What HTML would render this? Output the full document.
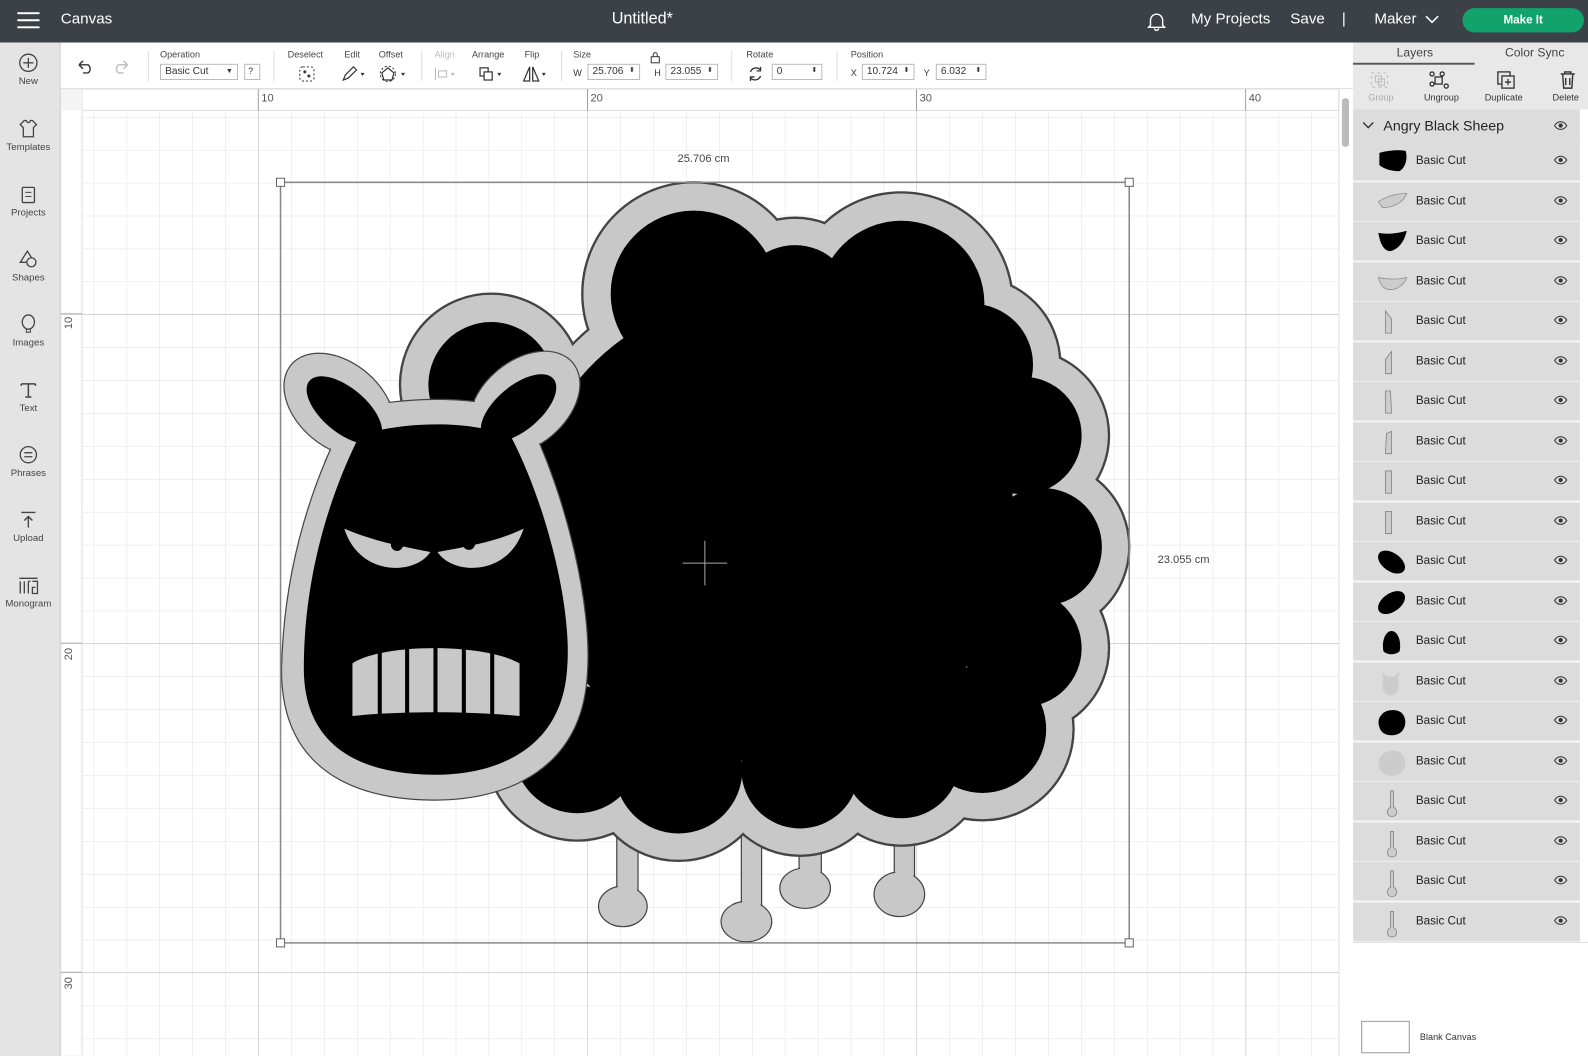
<!DOCTYPE html>
<html><head><meta charset="utf-8"><style>
*{box-sizing:border-box;margin:0;padding:0}
html,body{width:1588px;height:1056px;overflow:hidden;background:#fff}
body{font-family:"Liberation Sans",sans-serif;color:#333}
#w{position:absolute;left:0;top:0;width:1568px;height:1043px;transform:scale(1.01276);transform-origin:0 0;overflow:hidden}
.top{position:absolute;left:0;top:0;width:1568px;height:42px;background:#3c4148;color:#fff}
.top span{position:absolute;top:10px;font-size:16px}
.left{position:absolute;left:0;top:42px;width:60px;height:1014px;background:#e4e4e4;border-right:1px solid #ccc}
.nav{position:absolute;left:0;width:56px;text-align:center;font-size:9.5px;color:#444}
.nav svg{display:block;margin:0 auto 3px}
.tb{position:absolute;left:60px;top:42px;width:1276px;height:46px;background:#fff;border-bottom:1px solid #ddd}
.lb{position:absolute;top:7px;font-size:9px;color:#444}
.inp{position:absolute;top:21px;height:16px;border:1px solid #bbb;font-size:10px;padding:1px 4px;color:#333;background:#fff}
.sep{position:absolute;top:8px;width:1px;height:30px;background:#ddd}
.rp{position:absolute;left:1336px;top:42px;width:232px;height:1014px;background:#fff}
.row{position:absolute;left:0;width:224px;height:39px;background:#dcdcdc;border-bottom:1px solid #f0f0f0}
.row .t{position:absolute;left:62px;top:13px;font-size:11.5px;color:#222}
.eye{position:absolute;left:198px;top:13px}
.thumb{position:absolute;left:24px;top:7px}
</style></head><body><div id="w">
<div class="top">
<svg style="position:absolute;left:17px;top:12px" width="22" height="16"><rect y="0" width="22" height="2" fill="#fff"/><rect y="7" width="22" height="2" fill="#fff"/><rect y="14" width="22" height="2" fill="#fff"/></svg>
<span style="left:60px;font-size:15px">Canvas</span>
<span style="left:604px">Untitled*</span>
<svg style="position:absolute;left:1133px;top:11px" width="18" height="20" viewBox="0 0 18 20"><path d="M3 14V9a6 6 0 0 1 12 0v5l2 2H1z M7 17a2 2 0 0 0 4 0" fill="none" stroke="#fff" stroke-width="1.4"/></svg>
<span style="left:1176px;font-size:15px">My Projects</span>
<span style="left:1274px;font-size:15px">Save</span>
<span style="left:1325px;font-size:15px">|</span>
<span style="left:1357px;font-size:15px">Maker</span>
<svg style="position:absolute;left:1407px;top:15px" width="14" height="9"><path d="M1 1l6 6 6-6" fill="none" stroke="#fff" stroke-width="1.5"/></svg>
<div style="position:absolute;left:1444px;top:8px;width:120px;height:24px;border-radius:12px;background:#12a36c;color:#fff;font-size:11.5px;font-weight:bold;text-align:center;line-height:24px">Make It</div>
</div>

<div class="left">
<div class="nav" style="top:10px"><svg width="20" height="20"><circle cx="10" cy="10" r="8.5" fill="none" stroke="#444" stroke-width="1.3"/><path d="M10 5v10M5 10h10" stroke="#444" stroke-width="1.3"/></svg>New</div>
<div class="nav" style="top:75px"><svg width="20" height="20"><path d="M6 2l-4 4 3 3v9h10V9l3-3-4-4h-2a2 2 0 0 1-4 0z" fill="none" stroke="#444" stroke-width="1.3"/></svg>Templates</div>
<div class="nav" style="top:140px"><svg width="20" height="20"><rect x="4" y="3" width="12" height="15" rx="1" fill="none" stroke="#444" stroke-width="1.3"/><path d="M7 8h6M7 12h6" stroke="#444"/></svg>Projects</div>
<div class="nav" style="top:204px"><svg width="20" height="20"><path d="M9 2l-7 11h14z" fill="none" stroke="#444" stroke-width="1.3"/><circle cx="13" cy="13" r="4.5" fill="#e4e4e4" stroke="#444" stroke-width="1.3"/></svg>Shapes</div>
<div class="nav" style="top:268px"><svg width="20" height="20"><ellipse cx="10" cy="8" rx="6" ry="7" fill="none" stroke="#444" stroke-width="1.3"/><path d="M8 15h4v3H8z" fill="none" stroke="#444"/></svg>Images</div>
<div class="nav" style="top:333px"><svg width="20" height="20"><path d="M3 4h14M10 4v13M7 17h6M3 4v2M17 4v2" stroke="#444" stroke-width="1.5" fill="none"/></svg>Text</div>
<div class="nav" style="top:397px"><svg width="20" height="20"><circle cx="10" cy="10" r="8" fill="none" stroke="#444" stroke-width="1.3"/><path d="M6 8h8M6 12h8" stroke="#444" stroke-width="1.3"/></svg>Phrases</div>
<div class="nav" style="top:461px"><svg width="20" height="20"><path d="M3 3h14M10 7v11M6 11l4-4 4 4" stroke="#444" stroke-width="1.4" fill="none"/></svg>Upload</div>
<div class="nav" style="top:526px"><svg width="22" height="20"><path d="M2 3h18M3 6v12M7 6v12M11 6v12M11 6l2 0M15 6h5v12h-5v-6h3" stroke="#444" stroke-width="1.3" fill="none"/></svg>Monogram</div>
</div>

<div class="tb">
<svg style="position:absolute;left:16px;top:17px" width="18" height="14"><path d="M2 5h9a5 5 0 0 1 0 8H6M2 5l4-4M2 5l4 4" fill="none" stroke="#333" stroke-width="1.4"/></svg>
<svg style="position:absolute;left:50px;top:17px" width="18" height="14"><path d="M16 5H7a5 5 0 0 0 0 8h5M16 5l-4-4M16 5l-4 4" fill="none" stroke="#bbb" stroke-width="1.4"/></svg>
<div class="sep" style="left:86px"></div>
<div class="lb" style="left:98px">Operation</div>
<div class="inp" style="left:98px;width:77px">Basic Cut <span style="float:right;font-size:7px;margin-top:2px">▼</span></div>
<div class="inp" style="left:181px;width:16px;padding:1px 3px;font-size:9px">?</div>
<div class="sep" style="left:210px"></div>
<div class="lb" style="left:224px">Deselect</div>
<div class="lb" style="left:280px">Edit</div>
<div class="lb" style="left:314px">Offset</div>
<svg style="position:absolute;left:234px;top:22px" width="18" height="18"><rect x="2" y="2" width="14" height="14" rx="3" fill="none" stroke="#333" stroke-dasharray="2 2"/><circle cx="7" cy="7" r="1.5" fill="#333"/><circle cx="11" cy="11" r="1.5" fill="#333"/></svg>
<svg style="position:absolute;left:276px;top:22px" width="26" height="18"><path d="M3 15l2-5 8-8 3 3-8 8z" fill="none" stroke="#333" stroke-width="1.2"/><path d="M20 8l2 3 2-3z" fill="#333"/></svg>
<svg style="position:absolute;left:314px;top:22px" width="28" height="18"><path d="M9 3l6 5-2 7H5L3 8z" fill="none" stroke="#333" stroke-width="1.2"/><circle cx="9" cy="9" r="7.5" fill="none" stroke="#333" stroke-dasharray="2 2"/><path d="M22 8l2 3 2-3z" fill="#333"/></svg>
<div class="sep" style="left:356px"></div>
<div class="lb" style="left:369px;color:#bbb">Align</div>
<div class="lb" style="left:406px">Arrange</div>
<div class="lb" style="left:458px">Flip</div>
<svg style="position:absolute;left:369px;top:24px" width="24" height="14"><path d="M1 1v12M4 4h8v6H4z" fill="none" stroke="#bbb"/><path d="M16 6l2 3 2-3z" fill="#bbb"/></svg>
<svg style="position:absolute;left:412px;top:22px" width="26" height="18"><rect x="2" y="3" width="8" height="8" fill="none" stroke="#333" stroke-width="1.2"/><rect x="6" y="7" width="8" height="8" fill="#fff" stroke="#333" stroke-width="1.2"/><path d="M19 8l2 3 2-3z" fill="#333"/></svg>
<svg style="position:absolute;left:455px;top:22px" width="26" height="18"><path d="M8 2L2 16h6zM11 2l6 14h-6z" fill="none" stroke="#333" stroke-width="1.2"/><path d="M20 8l2 3 2-3z" fill="#333"/></svg>
<div class="sep" style="left:494px"></div>
<div class="lb" style="left:506px">Size</div>
<div style="position:absolute;left:506px;top:25px;font-size:9px">W</div>
<div class="inp" style="left:520px;width:52px">25.706 <span style="float:right;font-size:7px">⬍</span></div>
<svg style="position:absolute;left:581px;top:9px" width="12" height="12"><rect x="2" y="5" width="8" height="6" fill="none" stroke="#333"/><path d="M4 5V3a2 2 0 0 1 4 0v2" fill="none" stroke="#333"/></svg>
<div style="position:absolute;left:586px;top:25px;font-size:9px">H</div>
<div class="inp" style="left:597px;width:52px">23.055 <span style="float:right;font-size:7px">⬍</span></div>
<div class="sep" style="left:662px"></div>
<div class="lb" style="left:677px">Rotate</div>
<svg style="position:absolute;left:677px;top:22px" width="18" height="18"><path d="M14 5a6 6 0 0 0-10 2M4 13a6 6 0 0 0 10-2M14 2v4h-4M4 16v-4h4" fill="none" stroke="#333" stroke-width="1.3"/></svg>
<div class="inp" style="left:702px;width:50px">0 <span style="float:right;font-size:7px">⬍</span></div>
<div class="sep" style="left:766px"></div>
<div class="lb" style="left:780px">Position</div>
<div style="position:absolute;left:780px;top:25px;font-size:9px">X</div>
<div class="inp" style="left:791px;width:52px">10.724 <span style="float:right;font-size:7px">⬍</span></div>
<div style="position:absolute;left:852px;top:25px;font-size:9px">Y</div>
<div class="inp" style="left:864px;width:50px">6.032 <span style="float:right;font-size:7px">⬍</span></div>
</div>

<svg style="position:absolute;left:60px;top:88px" width="1276" height="968" viewBox="60 88 1276 968">
<defs>
<pattern id="mn" x="60" y="18" width="32.5" height="32.5" patternUnits="userSpaceOnUse"><path d="M0 0V32.5M0 0H32.5" stroke="#e2e2e2" stroke-width="1" fill="none"/></pattern>
<pattern id="mj" x="255" y="310" width="325" height="325" patternUnits="userSpaceOnUse"><path d="M0 0V325M0 0H325" stroke="#bdbdbd" stroke-width="1" fill="none"/></pattern>
</defs>
<rect x="60" y="88" width="1276" height="968" fill="#fff"/>
<rect x="60" y="88" width="1262" height="955" fill="url(#mn)"/>
<rect x="60" y="88" width="1262" height="955" fill="url(#mj)"/>
<rect x="60" y="88" width="1262" height="21" fill="#fff" stroke="#ddd"/>
<rect x="60" y="88" width="21" height="955" fill="#fff" stroke="#ddd"/>
<rect x="60" y="88" width="21" height="21" fill="#f4f4f4"/>
<g stroke="#888" stroke-width="0.8">
<path d="M255 88v21M580 88v21M905 88v21M1230 88v21M60 310h21M60 635h21M60 960h21"/>
</g>
<g font-size="11" fill="#555" font-family="Liberation Sans"><text x="258" y="100">10</text><text x="583" y="100">20</text><text x="908" y="100">30</text><text x="1233" y="100">40</text>
<text transform="translate(71 325) rotate(-90)">10</text><text transform="translate(71 652) rotate(-90)">20</text><text transform="translate(71 977) rotate(-90)">30</text></g>
<rect x="1325" y="97" width="7" height="48" rx="3" fill="#bbb"/>
<line x1="1322" y1="88" x2="1322" y2="1043" stroke="#ddd"/>

<!-- legs -->
<g fill="#c8c8c8" stroke="#444" stroke-width="1.2">
<rect x="609" y="820" width="21" height="60"/><ellipse cx="615" cy="895" rx="24" ry="20"/>
<rect x="732" y="820" width="20" height="80"/><ellipse cx="737" cy="910" rx="25" ry="20"/>
<rect x="789" y="810" width="22" height="55"/><ellipse cx="795" cy="877" rx="25" ry="20"/>
<rect x="883" y="800" width="20" height="65"/><ellipse cx="888" cy="883" rx="25" ry="22"/>
</g>
<g fill="#c8c8c8" stroke="none"><rect x="610" y="815" width="19" height="70"/><rect x="733" y="815" width="18" height="90"/><rect x="790" y="805" width="20" height="65"/><rect x="884" y="795" width="18" height="75"/></g>
<!-- body -->
<g id="bg" fill="#c8c8c8" stroke="#444" stroke-width="2.4">
<circle cx="685" cy="290" r="110"/><circle cx="785" cy="300" r="85"/><circle cx="890" cy="300" r="110"/><circle cx="960" cy="360" r="87"/>
<circle cx="1010" cy="430" r="85"/><circle cx="1030" cy="540" r="85"/><circle cx="1010" cy="640" r="85"/><circle cx="970" cy="720" r="90"/>
<circle cx="890" cy="750" r="85"/><circle cx="790" cy="760" r="85"/><circle cx="670" cy="760" r="90"/><circle cx="570" cy="740" r="90"/>
<circle cx="485" cy="380" r="90"/><ellipse cx="760" cy="520" rx="270" ry="260"/>
</g>
<g fill="#c8c8c8">
<circle cx="685" cy="290" r="108.8"/><circle cx="785" cy="300" r="83.8"/><circle cx="890" cy="300" r="108.8"/><circle cx="960" cy="360" r="85.8"/>
<circle cx="1010" cy="430" r="83.8"/><circle cx="1030" cy="540" r="83.8"/><circle cx="1010" cy="640" r="83.8"/><circle cx="970" cy="720" r="88.8"/>
<circle cx="890" cy="750" r="83.8"/><circle cx="790" cy="760" r="83.8"/><circle cx="670" cy="760" r="88.8"/><circle cx="570" cy="740" r="88.8"/>
<circle cx="485" cy="380" r="88.8"/><ellipse cx="760" cy="520" rx="268.8" ry="258.8"/>
</g>
<g fill="#000">
<circle cx="685" cy="290" r="82"/><circle cx="785" cy="300" r="58"/><circle cx="890" cy="300" r="82"/><circle cx="960" cy="360" r="60"/>
<circle cx="1010" cy="430" r="58"/><circle cx="1030" cy="540" r="58"/><circle cx="1010" cy="640" r="58"/><circle cx="970" cy="720" r="63"/>
<circle cx="890" cy="750" r="58"/><circle cx="790" cy="760" r="58"/><circle cx="670" cy="760" r="63"/><circle cx="570" cy="740" r="63"/>
<circle cx="485" cy="380" r="62"/><ellipse cx="760" cy="520" rx="242" ry="232"/>
</g>
<!-- head -->
<g fill="#c8c8c8" stroke="#444" stroke-width="1.2">
<ellipse cx="335" cy="400" rx="62" ry="42" transform="rotate(40 335 400)"/>
<ellipse cx="518" cy="398" rx="62" ry="42" transform="rotate(-40 518 398)"/>
<path d="M345 405C400 390 480 390 520 410C560 490 585 600 580 665C575 760 500 790 430 790C350 790 277 760 278 660C280 575 300 490 345 405Z"/>
</g>
<g fill="#c8c8c8"><ellipse cx="335" cy="400" rx="61" ry="41" transform="rotate(40 335 400)"/><ellipse cx="518" cy="398" rx="61" ry="41" transform="rotate(-40 518 398)"/>
<path d="M346 406C400 391 480 391 519 411C559 490 584 600 579 665C574 759 500 789 430 789C350 789 278 760 279 660C281 575 301 490 346 406Z"/></g>
<g fill="#000">
<ellipse cx="340" cy="405" rx="45" ry="22" transform="rotate(40 340 405)"/>
<ellipse cx="512" cy="403" rx="45" ry="22" transform="rotate(-40 512 403)"/>
<path d="M355 430C400 415 470 415 505 432C540 500 565 600 560 660C555 740 490 765 430 765C360 765 300 740 300 660C300 580 320 500 355 430Z"/>
</g>
<path d="M340 522C370 535 400 540 425 545C410 568 355 570 340 522ZM517 522C490 535 460 540 432 545C447 568 502 570 517 522Z" fill="#c8c8c8"/>
<circle cx="392" cy="538" r="6" fill="#000"/><circle cx="463" cy="537" r="6" fill="#000"/>
<path d="M348 655c30-20 130-20 165 0v52c-50-5-120-5-165 0z" fill="#c8c8c8"/>
<g stroke="#000" stroke-width="4"><path d="M375 640v72M402 635v74M430 635v74M458 635v74M486 640v72"/></g>
<!-- selection -->
<rect x="277" y="180" width="838" height="751" fill="none" stroke="#888" stroke-width="1.5"/>
<g fill="#fff" stroke="#666"><rect x="273" y="176" width="8" height="8"/><rect x="1111" y="176" width="8" height="8"/><rect x="273" y="927" width="8" height="8"/><rect x="1111" y="927" width="8" height="8"/></g>
<path d="M696 534v44M674 556h44" stroke="#aaa" stroke-width="1"/>
<g font-size="11" fill="#444" font-family="Liberation Sans"><text x="669" y="160">25.706 cm</text><text x="1143" y="556">23.055 cm</text></g>
</svg>

<div class="rp">
<div style="position:absolute;left:0;top:0;width:232px;height:22px;background:#e8e8e8;font-size:12px;color:#444">
<span style="position:absolute;left:43px;top:3px">Layers</span><span style="position:absolute;left:150px;top:3px">Color Sync</span>
<div style="position:absolute;left:0;top:20px;width:120px;height:2px;background:#555"></div></div>
<div style="position:absolute;left:0;top:22px;width:232px;height:44px;background:#e8e8e8;font-size:9px;color:#333">
<span style="position:absolute;left:15px;top:27px;color:#aaa">Group</span><span style="position:absolute;left:70px;top:27px">Ungroup</span><span style="position:absolute;left:130px;top:27px">Duplicate</span><span style="position:absolute;left:197px;top:27px">Delete</span>
<svg style="position:absolute;left:16px;top:6px" width="20" height="18"><rect x="2" y="2" width="16" height="14" fill="none" stroke="#bbb" stroke-dasharray="3 3"/><rect x="6" y="5" width="6" height="6" fill="none" stroke="#bbb"/><rect x="9" y="8" width="6" height="6" fill="none" stroke="#bbb"/></svg>
<svg style="position:absolute;left:74px;top:5px" width="22" height="20"><g fill="none" stroke="#333" stroke-width="1.3"><circle cx="4" cy="4" r="2"/><circle cx="14" cy="4" r="2"/><circle cx="4" cy="14" r="2"/><circle cx="18" cy="16" r="2"/><rect x="7" y="7" width="7" height="7"/></g></svg>
<svg style="position:absolute;left:141px;top:5px" width="20" height="20"><rect x="2" y="2" width="12" height="12" fill="none" stroke="#333" stroke-width="1.3"/><rect x="6" y="6" width="12" height="12" fill="#e8e8e8" stroke="#333" stroke-width="1.3"/><path d="M12 9v6M9 12h6" stroke="#333" stroke-width="1.3"/></svg>
<svg style="position:absolute;left:203px;top:5px" width="18" height="20"><path d="M2 4h14M6 4V2h6v2M4 4l1 14h8l1-14M7 8v7M11 8v7" fill="none" stroke="#333" stroke-width="1.4"/></svg>
</div>
<div style="position:absolute;left:0;top:66px;width:224px;height:33px;background:#dcdcdc">
<svg style="position:absolute;left:9px;top:12px" width="12" height="8"><path d="M1 1l5 5 5-5" fill="none" stroke="#333" stroke-width="1.4"/></svg>
<span style="position:absolute;left:30px;top:8px;font-size:14px;color:#222">Angry Black Sheep</span>
<svg class="eye" style="top:11px" width="14" height="10"><path d="M1 5c3-5 9-5 12 0-3 5-9 5-12 0z" fill="none" stroke="#333"/><circle cx="7" cy="5" r="2" fill="#333"/></svg>
<div style="position:absolute;left:24px;top:32px;width:200px;height:1px;background:#f0f0f0"></div>
</div>
<div style="position:absolute;left:0;top:888px;width:232px;height:126px;border-top:1px solid #ddd;background:#fff"></div>
<div style="position:absolute;left:8px;top:966px;width:48px;height:32px;border:1px solid #999;background:#fff"></div>
<span style="position:absolute;left:66px;top:977px;font-size:9px">Blank Canvas</span>
</div>
<div style="position:absolute;left:1336px;top:140px">
<div class="row" style="top:0"><svg class="thumb" width="30" height="24"><path d="M2 4c10-3 20-3 26-2 2 8 0 16-6 20-8 0-15-2-20-6z" fill="#000"/></svg><span class="t">Basic Cut</span><svg class="eye" width="14" height="10"><path d="M1 5c3-5 9-5 12 0-3 5-9 5-12 0z" fill="none" stroke="#333"/><circle cx="7" cy="5" r="2" fill="#333"/></svg></div>
<div class="row" style="top:39.5px"><svg class="thumb" width="30" height="24"><path d="M1 12c10-6 20-8 28-8-4 10-14 14-24 14z" fill="#ccc" stroke="#888" stroke-width=".7"/></svg><span class="t">Basic Cut</span><svg class="eye" width="14" height="10"><path d="M1 5c3-5 9-5 12 0-3 5-9 5-12 0z" fill="none" stroke="#333"/><circle cx="7" cy="5" r="2" fill="#333"/></svg></div>
<div class="row" style="top:79px"><svg class="thumb" width="30" height="24"><path d="M1 4c10 2 20 0 28-2-2 10-8 18-16 20-6 0-10-6-12-18z" fill="#000"/></svg><span class="t">Basic Cut</span><svg class="eye" width="14" height="10"><path d="M1 5c3-5 9-5 12 0-3 5-9 5-12 0z" fill="none" stroke="#333"/><circle cx="7" cy="5" r="2" fill="#333"/></svg></div>
<div class="row" style="top:118.5px"><svg class="thumb" width="30" height="24"><path d="M1 8c10 2 20 2 28 0-3 8-10 12-16 12-6 0-10-4-12-12z" fill="#ccc" stroke="#888" stroke-width=".7"/></svg><span class="t">Basic Cut</span><svg class="eye" width="14" height="10"><path d="M1 5c3-5 9-5 12 0-3 5-9 5-12 0z" fill="none" stroke="#333"/><circle cx="7" cy="5" r="2" fill="#333"/></svg></div>
<div class="row" style="top:158px"><svg class="thumb" width="30" height="26"><path d="M8 2l6 8v14H8z" fill="#ccc" stroke="#777" stroke-width=".7"/></svg><span class="t">Basic Cut</span><svg class="eye" width="14" height="10"><path d="M1 5c3-5 9-5 12 0-3 5-9 5-12 0z" fill="none" stroke="#333"/><circle cx="7" cy="5" r="2" fill="#333"/></svg></div>
<div class="row" style="top:197.5px"><svg class="thumb" width="30" height="26"><path d="M14 2l-6 8v14h6z" fill="#ccc" stroke="#777" stroke-width=".7"/></svg><span class="t">Basic Cut</span><svg class="eye" width="14" height="10"><path d="M1 5c3-5 9-5 12 0-3 5-9 5-12 0z" fill="none" stroke="#333"/><circle cx="7" cy="5" r="2" fill="#333"/></svg></div>
<div class="row" style="top:237px"><svg class="thumb" width="30" height="26"><path d="M8 2h5l1 22H8z" fill="#ccc" stroke="#777" stroke-width=".7"/></svg><span class="t">Basic Cut</span><svg class="eye" width="14" height="10"><path d="M1 5c3-5 9-5 12 0-3 5-9 5-12 0z" fill="none" stroke="#333"/><circle cx="7" cy="5" r="2" fill="#333"/></svg></div>
<div class="row" style="top:276.5px"><svg class="thumb" width="30" height="26"><path d="M9 4l5-2v22H8z" fill="#ccc" stroke="#777" stroke-width=".7"/></svg><span class="t">Basic Cut</span><svg class="eye" width="14" height="10"><path d="M1 5c3-5 9-5 12 0-3 5-9 5-12 0z" fill="none" stroke="#333"/><circle cx="7" cy="5" r="2" fill="#333"/></svg></div>
<div class="row" style="top:316px"><svg class="thumb" width="30" height="26"><rect x="8" y="2" width="6" height="22" fill="#ccc" stroke="#777" stroke-width=".7"/></svg><span class="t">Basic Cut</span><svg class="eye" width="14" height="10"><path d="M1 5c3-5 9-5 12 0-3 5-9 5-12 0z" fill="none" stroke="#333"/><circle cx="7" cy="5" r="2" fill="#333"/></svg></div>
<div class="row" style="top:355.5px"><svg class="thumb" width="30" height="26"><rect x="8" y="2" width="6" height="22" fill="#ccc" stroke="#777" stroke-width=".7"/></svg><span class="t">Basic Cut</span><svg class="eye" width="14" height="10"><path d="M1 5c3-5 9-5 12 0-3 5-9 5-12 0z" fill="none" stroke="#333"/><circle cx="7" cy="5" r="2" fill="#333"/></svg></div>
<div class="row" style="top:395px"><svg class="thumb" width="30" height="26"><ellipse cx="14" cy="13" rx="15" ry="9" transform="rotate(35 14 13)" fill="#000"/></svg><span class="t">Basic Cut</span><svg class="eye" width="14" height="10"><path d="M1 5c3-5 9-5 12 0-3 5-9 5-12 0z" fill="none" stroke="#333"/><circle cx="7" cy="5" r="2" fill="#333"/></svg></div>
<div class="row" style="top:434.5px"><svg class="thumb" width="30" height="26"><ellipse cx="14" cy="13" rx="15" ry="9" transform="rotate(-35 14 13)" fill="#000"/></svg><span class="t">Basic Cut</span><svg class="eye" width="14" height="10"><path d="M1 5c3-5 9-5 12 0-3 5-9 5-12 0z" fill="none" stroke="#333"/><circle cx="7" cy="5" r="2" fill="#333"/></svg></div>
<div class="row" style="top:474px"><svg class="thumb" width="30" height="28"><path d="M6 22c-2-10 2-20 8-20s10 10 8 20c-4 4-12 4-16 0z" fill="#000"/></svg><span class="t">Basic Cut</span><svg class="eye" width="14" height="10"><path d="M1 5c3-5 9-5 12 0-3 5-9 5-12 0z" fill="none" stroke="#333"/><circle cx="7" cy="5" r="2" fill="#333"/></svg></div>
<div class="row" style="top:513.5px"><svg class="thumb" width="30" height="28"><path d="M4 2l5 5h8l5-5-2 8c2 6 2 14-7 16-9-2-9-10-7-16z" fill="#ccc"/></svg><span class="t">Basic Cut</span><svg class="eye" width="14" height="10"><path d="M1 5c3-5 9-5 12 0-3 5-9 5-12 0z" fill="none" stroke="#333"/><circle cx="7" cy="5" r="2" fill="#333"/></svg></div>
<div class="row" style="top:553px"><svg class="thumb" width="30" height="28"><path d="M4 6c4-6 16-6 20-2 6 6 4 16-2 20-8 4-18 2-20-6-2-6 0-10 2-12z" fill="#000"/></svg><span class="t">Basic Cut</span><svg class="eye" width="14" height="10"><path d="M1 5c3-5 9-5 12 0-3 5-9 5-12 0z" fill="none" stroke="#333"/><circle cx="7" cy="5" r="2" fill="#333"/></svg></div>
<div class="row" style="top:592.5px"><svg class="thumb" width="30" height="28"><path d="M4 6c4-6 16-6 20-2 6 6 4 16-2 20-8 4-18 2-20-6-2-6 0-10 2-12z" fill="#ccc"/></svg><span class="t">Basic Cut</span><svg class="eye" width="14" height="10"><path d="M1 5c3-5 9-5 12 0-3 5-9 5-12 0z" fill="none" stroke="#333"/><circle cx="7" cy="5" r="2" fill="#333"/></svg></div>
<div class="row" style="top:632px"><svg class="thumb" width="30" height="28"><path d="M13 2h3v16c4 2 4 8 0 9h-3c-4-1-4-7 0-9z" fill="#ccc" stroke="#777" stroke-width=".7"/></svg><span class="t">Basic Cut</span><svg class="eye" width="14" height="10"><path d="M1 5c3-5 9-5 12 0-3 5-9 5-12 0z" fill="none" stroke="#333"/><circle cx="7" cy="5" r="2" fill="#333"/></svg></div>
<div class="row" style="top:671.5px"><svg class="thumb" width="30" height="28"><path d="M13 2h3v16c4 2 4 8 0 9h-3c-4-1-4-7 0-9z" fill="#ccc" stroke="#777" stroke-width=".7"/></svg><span class="t">Basic Cut</span><svg class="eye" width="14" height="10"><path d="M1 5c3-5 9-5 12 0-3 5-9 5-12 0z" fill="none" stroke="#333"/><circle cx="7" cy="5" r="2" fill="#333"/></svg></div>
<div class="row" style="top:711px"><svg class="thumb" width="30" height="28"><path d="M13 2h3v16c4 2 4 8 0 9h-3c-4-1-4-7 0-9z" fill="#ccc" stroke="#777" stroke-width=".7"/></svg><span class="t">Basic Cut</span><svg class="eye" width="14" height="10"><path d="M1 5c3-5 9-5 12 0-3 5-9 5-12 0z" fill="none" stroke="#333"/><circle cx="7" cy="5" r="2" fill="#333"/></svg></div>
<div class="row" style="top:750.5px"><svg class="thumb" width="30" height="28"><path d="M13 2h3v16c4 2 4 8 0 9h-3c-4-1-4-7 0-9z" fill="#ccc" stroke="#777" stroke-width=".7"/></svg><span class="t">Basic Cut</span><svg class="eye" width="14" height="10"><path d="M1 5c3-5 9-5 12 0-3 5-9 5-12 0z" fill="none" stroke="#333"/><circle cx="7" cy="5" r="2" fill="#333"/></svg></div>
</div>
</div></body></html>
